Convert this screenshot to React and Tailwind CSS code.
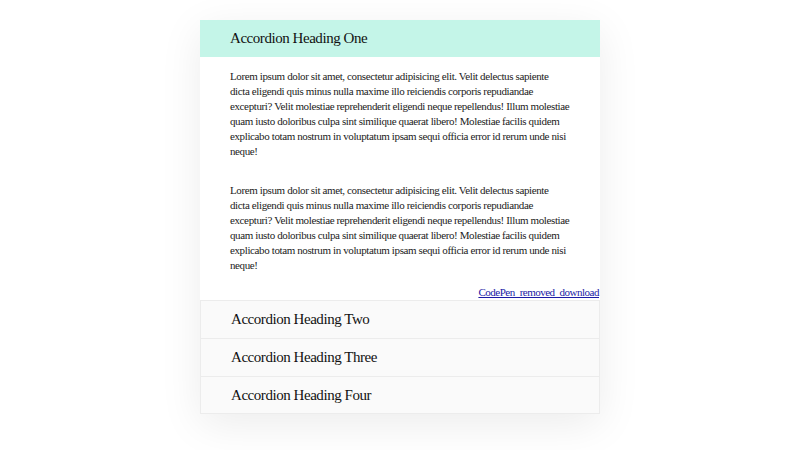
import React, { useState } from 'react';

const LOREM =
    'Lorem ipsum dolor sit amet, consectetur adipisicing elit. Velit delectus sapiente dicta eligendi quis minus nulla maxime illo reiciendis corporis repudiandae excepturi? Velit molestiae reprehenderit eligendi neque repellendus! Illum molestiae quam iusto doloribus culpa sint similique quaerat libero! Molestiae facilis quidem explicabo totam nostrum in voluptatum ipsam sequi officia error id rerum unde nisi neque!';

const SECTIONS = [
    { id: 1, title: 'Accordion Heading One' },
    { id: 2, title: 'Accordion Heading Two' },
    { id: 3, title: 'Accordion Heading Three' },
    { id: 4, title: 'Accordion Heading Four' },
];

const App = () => {
    const [open, setOpen] = useState(1);

    return (
        <div className="w-full h-[450px] bg-white flex justify-center pt-5" style={{ fontFamily: '"Liberation Serif", "Times New Roman", serif' }}>
            <div className="w-[400px] self-start shadow-[0_10px_40px_rgba(0,0,0,0.08)]">
                {SECTIONS.map((section, i) => {
                    const isOpen = open === section.id;
                    const isLast = i === SECTIONS.length - 1;
                    return (
                        <div key={section.id}>
                            {isOpen ? (
                                <>
                                    <button
                                        onClick={() => setOpen(0)}
                                        className="w-full h-[37px] flex items-center px-[30px] text-left text-[15px] tracking-[-0.45px] text-[#111] bg-[#c4f5e8]"
                                    >
                                        {section.title}
                                    </button>
                                    <div className="bg-white">
                                        <div className="pt-3 px-[30px] text-[11px] tracking-[-0.38px] leading-[15px] text-[#222]">
                                            <p className="mb-6">{LOREM}</p>
                                            <p>{LOREM}</p>
                                        </div>
                                        <div className="text-right text-[11px] tracking-[-0.5px] leading-[15px] pt-[12px] pr-px">
                                            <a href="#" className="text-[#1a1aa6] underline">CodePen_removed_download</a>
                                        </div>
                                    </div>
                                </>
                            ) : (
                                <button
                                    onClick={() => setOpen(section.id)}
                                    className={
                                        isLast
                                            ? 'w-full h-[38px] flex items-center px-[30px] text-left text-[15px] tracking-[-0.45px] text-[#111] bg-[#fafafa] border border-[#ececec]'
                                            : 'w-full h-[38px] flex items-center px-[30px] text-left text-[15px] tracking-[-0.45px] text-[#111] bg-[#fafafa] border-x border-t border-[#ececec]'
                                    }
                                >
                                    {section.title}
                                </button>
                            )}
                        </div>
                    );
                })}
            </div>
        </div>
    );
};

export default App;
